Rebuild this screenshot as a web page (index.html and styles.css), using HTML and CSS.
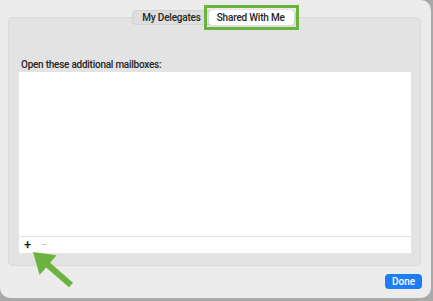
FILE: index.html
```html
<!DOCTYPE html>
<html>
<head>
<meta charset="utf-8">
<link rel="stylesheet" href="styles.css">
</head>
<body>
<div class="window">
  <div class="tabs">
    <div class="seg">
      <div class="tab">My Delegates</div>
      <div class="tab active">Shared With Me</div>
    </div>
  </div>
  <div class="group">
    <div class="label">Open these additional mailboxes:</div>
    <div class="list">
      <div class="list-body"></div>
      <div class="list-foot">
        <span class="btn-plus">+</span>
        <span class="btn-minus">−</span>
      </div>
    </div>
  </div>
  <div class="actions">
    <button class="done">Done</button>
  </div>
  <svg class="arrow" width="433" height="301" viewBox="0 0 433 301">
    <polygon points="33,252 56.6,255.3 50.1,262.8 73,282.7 69,287.3 46.1,267.4 39.6,275" fill="#6db33f"/>
  </svg>
</div>
</body>
</html>
```
FILE: styles.css
```css
html, body {
  margin: 0;
  padding: 0;
  background: #a9a9a9;
  width: 433px;
  height: 301px;
  overflow: hidden;
}
.window {
  position: relative;
  width: 431px;
  height: 298px;
  background: #ececec;
  border-radius: 0 10px 10px 10px;
  box-sizing: border-box;
  padding: 10px 9px 0 8px;
  font-family: Roboto, "Liberation Sans", Arial, sans-serif;
  color: #262626;
  display: flex;
  flex-direction: column;
}
.tabs {
  display: flex;
  justify-content: center;
  margin-bottom: -8px;
  position: relative;
  z-index: 2;
  padding-right: 2px;
}
.seg {
  display: flex;
  background: #dedede;
  border: 1px solid #d2d2d2;
  border-radius: 4px;
  height: 13px;
  align-items: center;
  padding: 0 1px 0 0;
}
.tab {
  font-size: 10px;
  font-weight: 500;
  line-height: 13px;
  padding: 0 8px 0 9px;
  letter-spacing: -0.2px;
}
.tab.active {
  position: relative;
  background: #ffffff;
  border-radius: 3px;
  height: 15px;
  line-height: 15px;
  padding: 0 9px 0 8px;
  box-shadow: 0 0 1px rgba(0,0,0,0.3);
}
.tab.active::after {
  content: "";
  position: absolute;
  left: -5px;
  right: -5px;
  top: -5px;
  bottom: -5px;
  border: 3px solid #6cb33e;
}
.group {
  height: 249px;
  background: #e3e3e3;
  border: 1px solid #dadada;
  border-radius: 5px;
  box-sizing: border-box;
  padding: 40px 9px 12px 10px;
  display: flex;
  flex-direction: column;
  margin-right: 1px;
}
.label {
  font-size: 10px;
  font-weight: 500;
  line-height: 13px;
  margin-left: 2px;
  margin-bottom: 1px;
  letter-spacing: -0.25px;
}
.list {
  flex: 1;
  background: #ffffff;
  display: flex;
  flex-direction: column;
}
.list-body {
  flex: 1;
  border-bottom: 1px solid #e2e2e2;
}
.list-foot {
  height: 16px;
  display: flex;
  align-items: center;
  padding-left: 5px;
  gap: 10px;
  font-size: 13px;
  line-height: 16px;
}
.btn-plus {
  color: #1a1a1a;
  font-weight: 500;
}
.btn-minus {
  color: #b8b8b8;
  font-size: 11px;
}
.actions {
  display: flex;
  justify-content: flex-end;
  padding-top: 8px;
}
.done {
  width: 37px;
  height: 15px;
  border: none;
  border-radius: 4px;
  background: #1d7df6;
  color: #ffffff;
  font-family: Roboto, "Liberation Sans", Arial, sans-serif;
  font-size: 10px;
  font-weight: 500;
  padding: 0;
  line-height: 15px;
}
.arrow {
  position: absolute;
  left: 0;
  top: 0;
  pointer-events: none;
}
```
